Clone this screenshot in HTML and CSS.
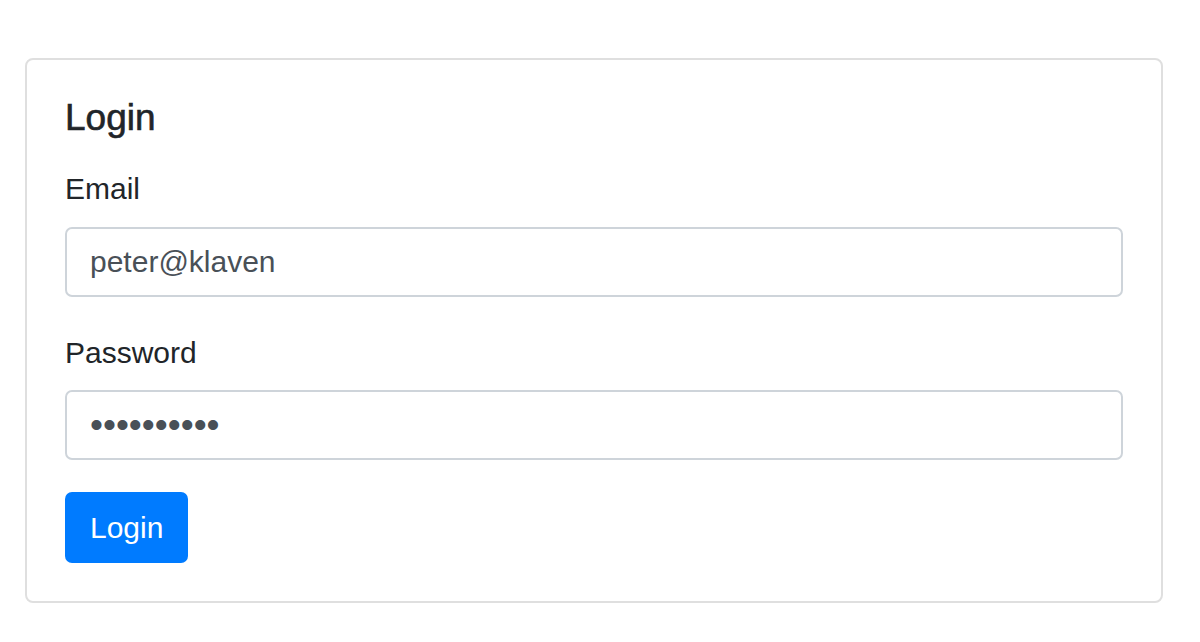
FILE: index.html
```html
<!DOCTYPE html>
<html lang="en">
<head>
  <meta charset="UTF-8">
  <meta name="viewport" content="width=device-width, initial-scale=1.0">
  <title>Login</title>
  <link rel="stylesheet" href="styles.css">
</head>
<body>

<div class="card">
  <h5 class="card-title">Login</h5>
  <form id="loginForm">
    <div class="form-group">
      <label for="email">Email</label>
      <input type="text" id="email" class="form-control" value="peter@klaven">
    </div>
    <div class="form-group">
      <label for="password">Password</label>
      <input type="password" id="password" class="form-control" value="cityslicka">
    </div>
    <button type="submit" class="btn">Login</button>
  </form>
</div>

</body>
</html>
```

FILE: styles.css
```css
body { font-family: "Liberation Sans", Arial, sans-serif; margin: 0; padding: 0; background: #fff; color: #212529; }
.card { margin: 58px 37px 0 25px; padding: 36px 38px 38px; border: 2px solid #dfdfdf; border-radius: 8px; }
.card-title { font-size: 37px; font-weight: 500; line-height: 44px; margin: 0 0 27px; -webkit-text-stroke: 0.6px #212529; }
.form-group { margin-bottom: 34px; }
.form-group:last-of-type { margin-bottom: 32px; }
label { display: block; font-size: 30px; line-height: 44px; margin-bottom: 16px; }
.form-control { display: block; box-sizing: border-box; width: 100%; height: 70px; padding: 0 23px; font-family: inherit; font-size: 30px; color: #495057; border: 2px solid #ced4da; border-radius: 7px; outline: none; }
.form-control[type="password"] { font-size: 37px; }
.form-group:last-of-type label { margin-bottom: 15px; }
.btn { display: block; height: 71px; padding: 0 25px; font-family: inherit; font-size: 30px; color: #fff; background-color: #007bff; border: 0; border-radius: 7px; }
```
